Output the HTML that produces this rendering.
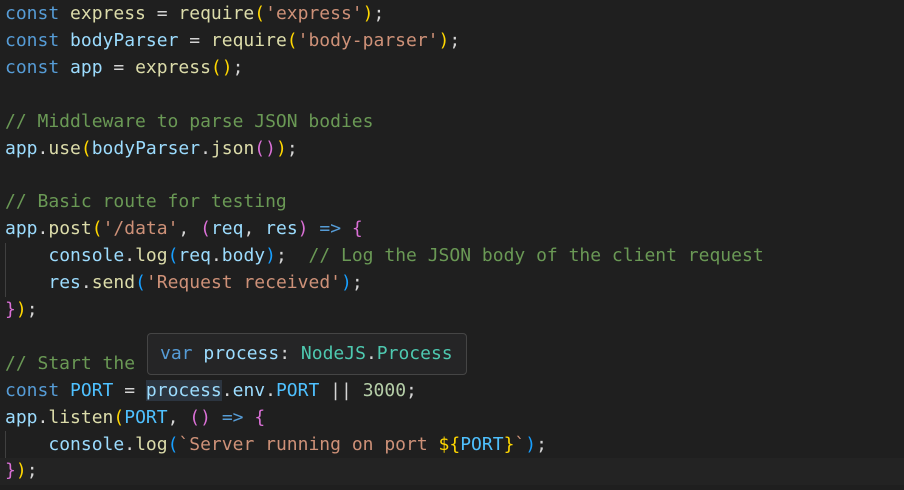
<!DOCTYPE html>
<html><head><meta charset="utf-8"><style>
html,body{margin:0;padding:0;background:#1f1f1f;width:904px;height:490px;overflow:hidden}
pre{margin:0;position:absolute;left:5px;top:1px;font-family:"DejaVu Sans Mono","Liberation Mono",monospace;font-size:18px;line-height:26.9px;color:#d4d4d4}
.k{color:#569cd6}.v{color:#9cdcfe}.f{color:#dcdcaa}.s{color:#ce9178}.c{color:#6a9955}.n{color:#b5cea8}.o{color:#4fc1ff}
.g{color:#ffd700}.p{color:#da70d6}.b{color:#179fff}.t{color:#4ec9b0}
.hl{background:#2c3540}
.guide{position:absolute;left:5px;width:1px;background:#404040}
.tip{position:absolute;left:147px;top:333px;width:320px;height:42px;background:#252526;border:1px solid #454545;border-radius:4px;box-sizing:border-box;font-family:"DejaVu Sans Mono","Liberation Mono",monospace;font-size:18px;line-height:40px;padding-left:12px;color:#d4d4d4}
.cur{position:absolute;left:0;top:458px;width:904px;height:27px;background:#232323}
</style></head><body>
<div class="cur"></div>
<div class="guide" style="top:243px;height:54px"></div>
<div class="guide" style="top:431px;height:27px"></div>
<pre><span class="k">const</span> <span class="f">express</span> = <span class="f">require</span><span class="g">(</span><span class="s">'express'</span><span class="g">)</span>;
<span class="k">const</span> <span class="v">bodyParser</span> = <span class="f">require</span><span class="g">(</span><span class="s">'body-parser'</span><span class="g">)</span>;
<span class="k">const</span> <span class="v">app</span> = <span class="f">express</span><span class="g">()</span>;

<span class="c">// Middleware to parse JSON bodies</span>
<span class="v">app</span>.<span class="f">use</span><span class="g">(</span><span class="v">bodyParser</span>.<span class="f">json</span><span class="p">()</span><span class="g">)</span>;

<span class="c">// Basic route for testing</span>
<span class="v">app</span>.<span class="f">post</span><span class="g">(</span><span class="s">'/data'</span>, <span class="p">(</span><span class="v">req</span>, <span class="v">res</span><span class="p">)</span> <span class="k">=&gt;</span> <span class="p">{</span>
    <span class="v">console</span>.<span class="f">log</span><span class="b">(</span><span class="v">req</span>.<span class="v">body</span><span class="b">)</span>;  <span class="c">// Log the JSON body of the client request</span>
    <span class="v">res</span>.<span class="f">send</span><span class="b">(</span><span class="s">'Request received'</span><span class="b">)</span>;
<span class="p">}</span><span class="g">)</span>;

<span class="c">// Start the server</span>
<span class="k">const</span> <span class="o">PORT</span> = <span class="v hl">process</span>.<span class="v">env</span>.<span class="o">PORT</span> || <span class="n">3000</span>;
<span class="v">app</span>.<span class="f">listen</span><span class="g">(</span><span class="o">PORT</span>, <span class="p">()</span> <span class="k">=&gt;</span> <span class="p">{</span>
    <span class="v">console</span>.<span class="f">log</span><span class="b">(</span><span class="s">`Server running on port </span><span class="g">${</span><span class="o">PORT</span><span class="g">}</span><span class="s">`</span><span class="b">)</span>;
<span class="p">}</span><span class="g">)</span>;</pre>
<div class="tip"><span class="k">var</span> <span class="v">process</span>: <span class="t">NodeJS</span>.<span class="t">Process</span></div>
</body></html>
